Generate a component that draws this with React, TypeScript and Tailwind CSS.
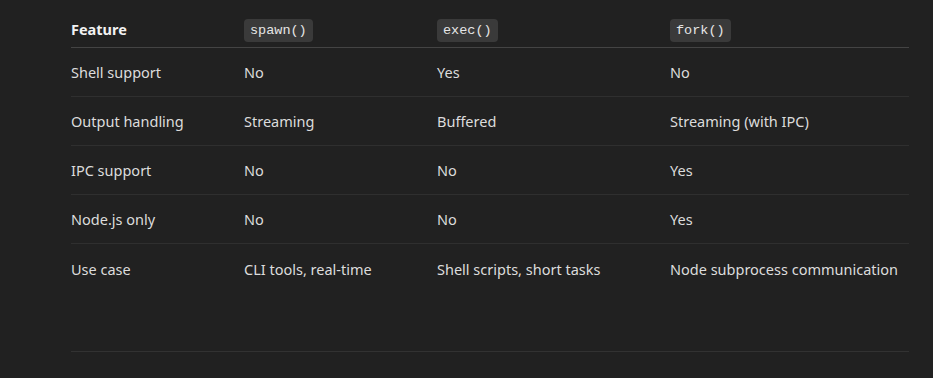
const rows = [
  ['Shell support', 'No', 'Yes', 'No'],
  ['Output handling', 'Streaming', 'Buffered', 'Streaming (with IPC)'],
  ['IPC support', 'No', 'No', 'Yes'],
  ['Node.js only', 'No', 'No', 'Yes'],
  ['Use case', 'CLI tools, real-time', 'Shell scripts, short tasks', 'Node subprocess communication'],
];

const Code = ({ children }: { children: string }) => (
  <code className="inline-block rounded-[4px] bg-[#3a3a3a] px-[6px] py-[3px] font-['Liberation_Mono',monospace] text-[13.5px] leading-[17px] text-[#e6e6e6]">
    {children}
  </code>
);

const cols = 'grid grid-cols-[173px_193px_233px_1fr]';

export default function App() {
  return (
    <div className="min-h-[378px] bg-[#212121] pl-[71px] pr-[24px] pt-[12px] font-['Noto_Sans',sans-serif] text-[14.5px] text-[#dcdcdc]">
      <div className="border-b border-[#323232]">
        <div className={`${cols} h-[36px] items-center border-b border-[#444444]`}>
          <div className="pt-[1px] font-bold text-[#f2f2f2]">Feature</div>
          <div><Code>spawn()</Code></div>
          <div><Code>exec()</Code></div>
          <div><Code>fork()</Code></div>
        </div>
        {rows.map((r, i) => (
          <div
            key={r[0]}
            className={`${cols} h-[49px] items-center ${i < rows.length - 1 ? 'border-b border-[#2f2f2f]' : ''}`}
          >
            {r.map((c, j) => (
              <div key={j} className="whitespace-nowrap pt-[2px]">{c}</div>
            ))}
          </div>
        ))}
        <div className="h-[58px]" />
      </div>
    </div>
  );
}
